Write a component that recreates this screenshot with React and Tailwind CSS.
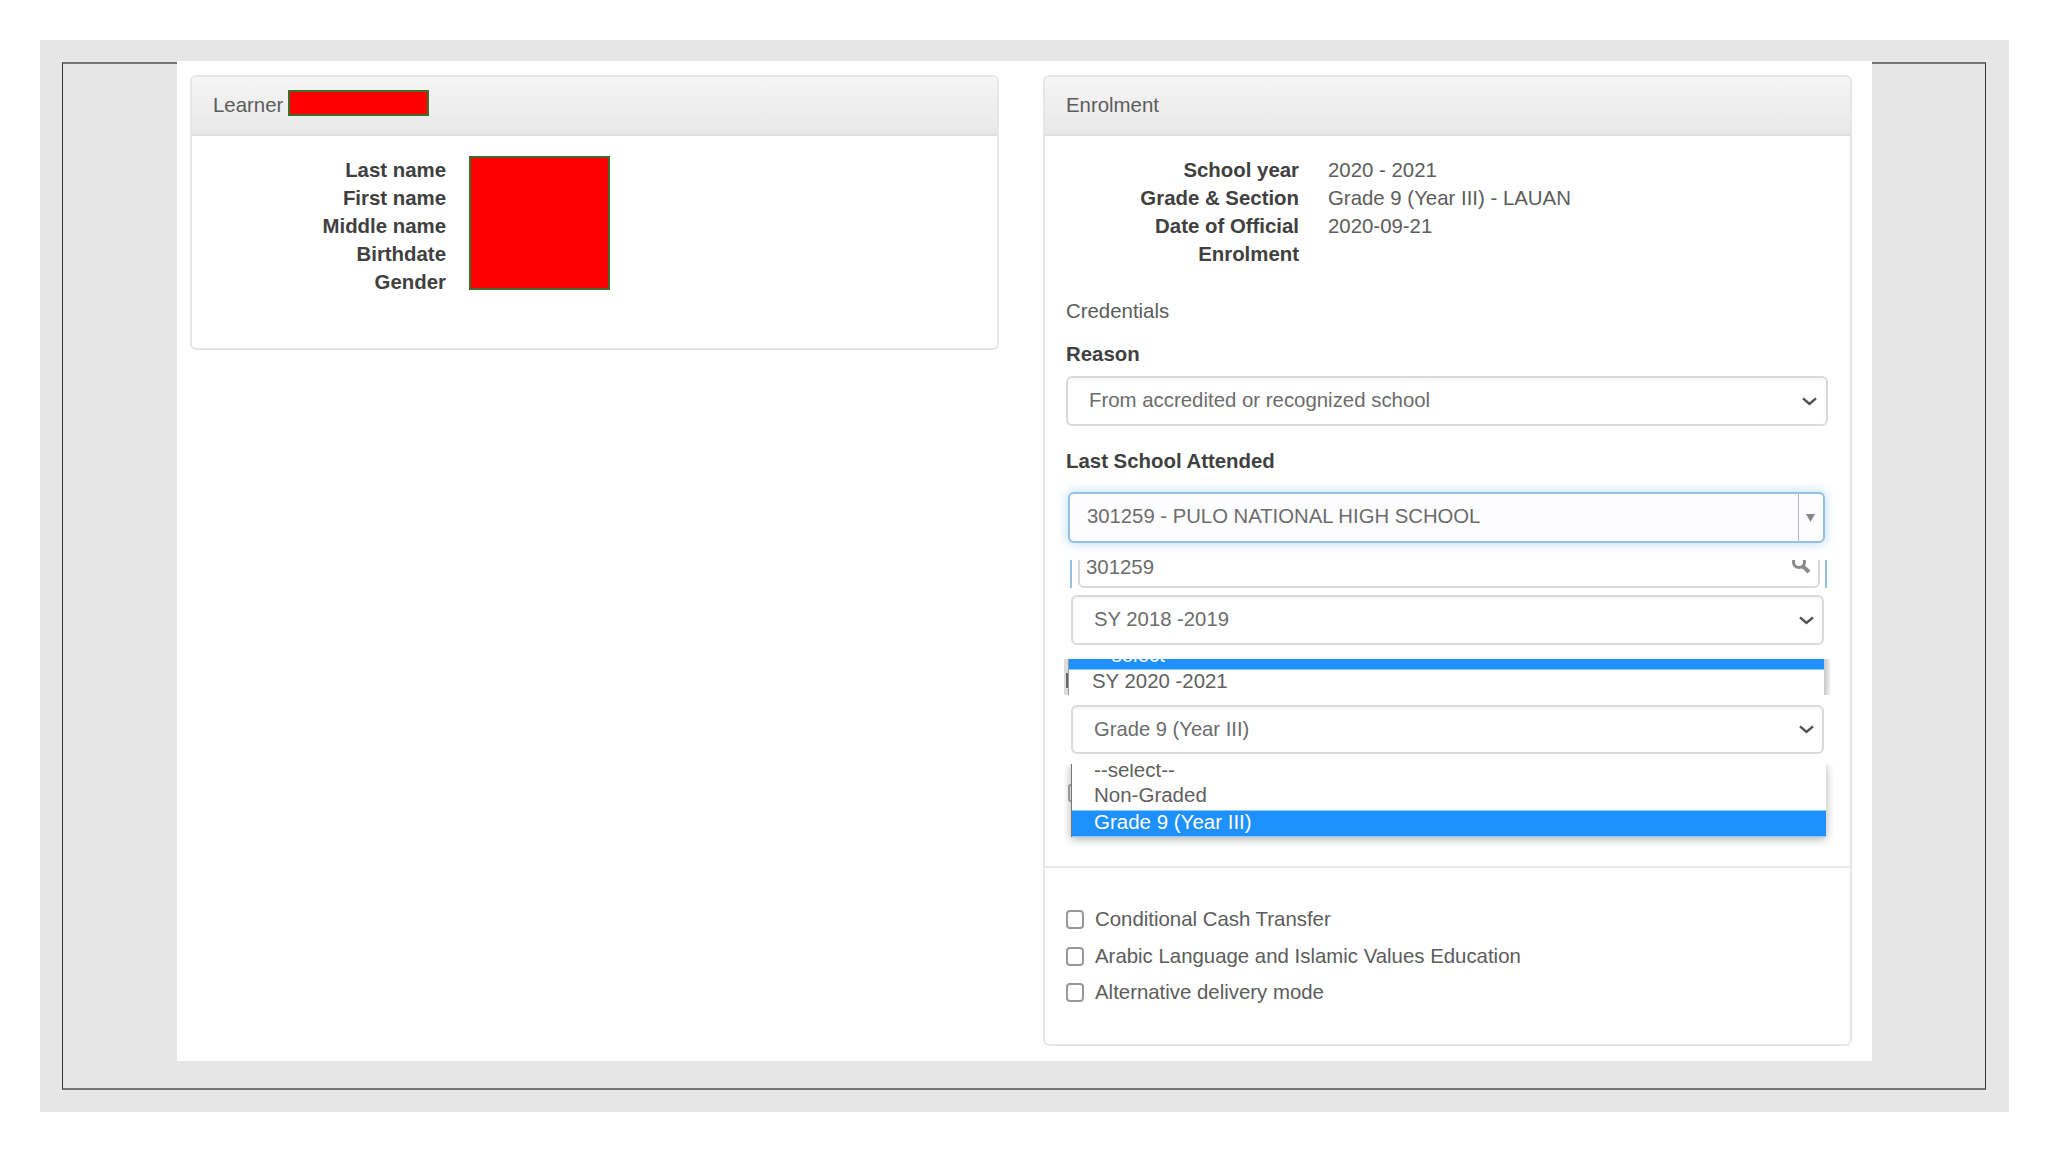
import React from "react";

const learnerFields = ["Last name", "First name", "Middle name", "Birthdate", "Gender"];

const enrolmentFields = [
  { label: "School year", value: "2020 - 2021" },
  { label: "Grade & Section", value: "Grade 9 (Year III) - LAUAN" },
  { label: "Date of Official Enrolment", value: "2020-09-21" },
];

const programs = [
  "Conditional Cash Transfer",
  "Arabic Language and Islamic Values Education",
  "Alternative delivery mode",
];

const Chevron = () => (
  <svg className="h-[9px] w-[15px]" viewBox="0 0 15 9" fill="none" stroke="#505050" strokeWidth="2.4">
    <path d="M1 1.3L7.5 7L14 1.3" />
  </svg>
);

const SelectBox = ({ value, className }) => (
  <div
    className={`flex items-center justify-between rounded-md border-2 border-[#dadada] bg-white text-[#6c6c6c] shadow-[inset_0_2px_2px_rgba(0,0,0,0.04)] ${className}`}
  >
    <span className="-mt-0.5">{value}</span>
    <Chevron />
  </div>
);

const Card = ({ title, extra, className, children }) => (
  <section
    className={`overflow-hidden rounded-md border-2 border-[#e6e6e6] bg-white ${className}`}
  >
    <header className="flex h-[59px] items-center border-b-2 border-[#dfdfdf] bg-linear-to-b from-[#f5f5f5] to-[#e8e8e8] pl-[21px]">
      <span className="-mt-px">{title}</span>
      {extra}
    </header>
    {children}
  </section>
);

const LearnerCard = () => (
  <Card
    title="Learner"
    extra={<div className="mb-[5px] ml-[5px] h-[26px] w-[141px] border-2 border-[#3f6b2c] bg-[#ff0000]" />}
    className="h-[275px] w-[809px]"
  >
    <div className="flex pt-5 pl-[21px]">
      <ul className="w-[233px] text-right font-bold text-[#404040]">
        {learnerFields.map((field) => (
          <li key={field}>{field}</li>
        ))}
      </ul>
      <div className="ml-[23px] h-[134px] w-[141px] border-2 border-[#3f6b2c] bg-[#ff0000]" />
    </div>
  </Card>
);

const EnrolmentCard = () => (
  <Card title="Enrolment" className="h-[971px] w-[809px]">
    <dl className="pt-5 pl-[21px]">
      {enrolmentFields.map((field) => (
        <div key={field.label} className="flex">
          <dt className="w-[233px] pl-10 text-right font-bold text-[#404040]">{field.label}</dt>
          <dd className="ml-[29px]">{field.value}</dd>
        </div>
      ))}
    </dl>

    <div className="pl-[21px]">
      <p className="mt-[29px]">Credentials</p>
      <p className="mt-[15px] font-bold text-[#404040]">Reason</p>
      <SelectBox
        value="From accredited or recognized school"
        className="mt-2 h-[50px] w-[762px] pr-[9px] pl-[21px]"
      />
      <p className="mt-[21px] font-bold text-[#404040]">Last School Attended</p>

      {/* focused school lookup */}
      <div className="mt-[17px] ml-0.5 flex h-[51px] w-[757px] items-center rounded-md border-2 border-[#95bfe3] bg-[#fdfcfe] pl-[17px] text-[20.3px] text-[#6c6c6c] shadow-[0_0_10px_2px_rgba(102,175,233,0.35)]">
        <span className="-mt-[3px] flex-1">301259 - PULO NATIONAL HIGH SCHOOL</span>
        <div className="flex h-full w-[25px] items-center justify-center border-l border-[#b8b8b8] pr-px">
          <svg className="h-2 w-[9px]" viewBox="0 0 9 8" fill="#888">
            <path d="M0 0H9L4.5 8Z" />
          </svg>
        </div>
      </div>

      {/* search row, cut off at the top */}
      <div className="mt-[17px] ml-1 flex h-7 w-[757px] overflow-hidden border-x-2 border-[#95bfe3] pr-[5px] pl-1.5">
        <div className="-mt-4 flex h-11 flex-1 items-center justify-between rounded-md border-2 border-[#d9d9d9] pt-px pr-[7px] pl-[6px] text-[#6c6c6c]">
          <span>301259</span>
          <svg className="h-5 w-5" viewBox="0 0 20 20" fill="none" stroke="#8a8a8a" strokeWidth="3">
            <circle cx="8" cy="5" r="5.5" />
            <path d="M11.5 9L18 15" strokeWidth="4" />
          </svg>
        </div>
      </div>

      <SelectBox value="SY 2018 -2019" className="mt-[7px] ml-[5px] h-[50px] w-[753px] pr-[8px] pl-[21px] text-[20.3px]" />

      {/* school year options */}
      <div className="mt-[14px] -ml-0.5 flex h-9 w-[766px] overflow-hidden">
        <div className="flex w-[5px] items-start justify-end border-r border-[#999] bg-[#dcdcdc] pt-[14px]">
          <div className="h-[15px] w-0.5 bg-[#666]" />
        </div>
        <div className="flex-1">
          <div className="h-[11px] overflow-hidden border-b border-[#8cc8ff] bg-[#1e90ff] pl-[29px] leading-none text-white">
            <div className="-mt-[14px]">--select--</div>
          </div>
          <div className="-mt-[3px] pl-[23px] text-[#606060]">SY 2020 -2021</div>
        </div>
        <div className="w-[6px] bg-linear-to-r from-[#c8c8c8] to-[#f0f0f0]" />
      </div>

      <SelectBox value="Grade 9 (Year III)" className="mt-[10px] ml-[5px] h-[49px] w-[753px] pr-[8px] pl-[21px] text-[20.2px]" />

      {/* grade level options */}
      <div className="mt-[10px] -ml-0.5 flex h-[89px] w-[770px] overflow-hidden pr-1.5">
        <div className="flex w-[7px] justify-end pt-5">
          <div className="h-[18px] w-[3px] rounded-l-[3px] border-y-2 border-l-2 border-[#aaa]" />
        </div>
        <div className="h-[73px] w-[755px] border-l border-[#777] text-[20.5px] text-[#606060] shadow-[0_2px_9px_rgba(0,0,0,0.32)]">
          <div className="h-[19px] overflow-hidden pl-[22px]">
            <div className="-mt-2">--select--</div>
          </div>
          <div className="h-[27px] pl-[22px] leading-[23px]">Non-Graded</div>
          <div className="h-[27px] border-y border-[#8cc8ff] bg-[#1e90ff] pl-[22px] leading-[21px] text-white">
            Grade 9 (Year III)
          </div>
        </div>
      </div>
    </div>

    <hr className="mt-[13px] border-t-2 border-[#e9e9e9]" />

    <ul className="mt-[37px] pl-[21px]">
      {programs.map((program) => (
        <li key={program} className="flex h-[36.5px] items-start">
          <input
            type="checkbox"
            className="mt-[5px] h-[19px] w-[18px] appearance-none rounded-[4px] border-2 border-[#989898] bg-white"
          />
          <span className="ml-[11px]">{program}</span>
        </li>
      ))}
    </ul>
  </Card>
);

export default function App() {
  return (
    <div className="h-[1152px] w-[2048px] bg-white px-10 pt-10 font-['Liberation_Sans',Arial,sans-serif] text-[20.4px] leading-7 text-[#5c5c5c]">
      <div className="h-[1072px] w-[1969px] bg-[#e6e6e6] px-[22px] pt-[22px]">
        <div className="h-[1028px] w-[1924px] border-x border-y-2 border-x-[#333] border-y-[#777]">
          <main className="-mt-[3px] ml-[114px] flex h-[1000px] w-[1695px] items-start gap-11 bg-white pt-3.5 pl-[13px]">
            <LearnerCard />
            <EnrolmentCard />
          </main>
        </div>
      </div>
    </div>
  );
}
